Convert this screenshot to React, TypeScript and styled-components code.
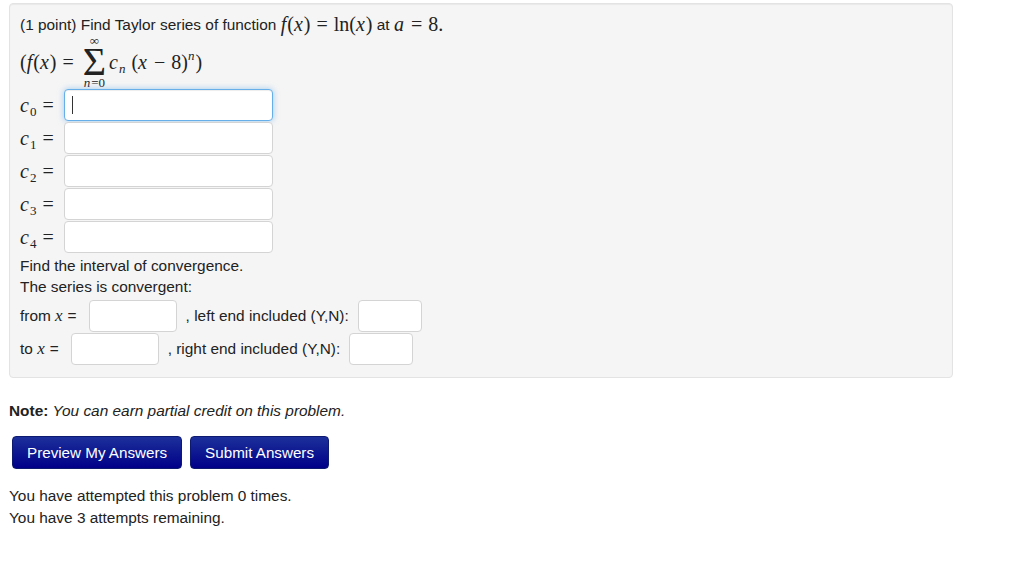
import React from 'react';
import styled, { createGlobalStyle } from 'styled-components';

const GlobalStyle = createGlobalStyle`
  html, body {
    margin: 0;
    padding: 0;
    background: #ffffff;
  }
  body {
    font-family: "Liberation Sans", Arial, sans-serif;
    font-size: 15.4px;
    color: #222;
  }
`;

const Page = styled.div`
  padding: 3px 9px 0 9px;
  width: 944px;
`;

const ProblemWell = styled.div`
  background: #f5f5f5;
  border: 1px solid #e3e3e3;
  border-radius: 4px;
  box-shadow: inset 0 1px 1px rgba(0, 0, 0, 0.05);
  padding: 10px 10px 12px 10px;
`;

const TextLine = styled.div`
  line-height: 21px;
  min-height: 21px;
  display: flex;
  align-items: center;
`;

const MathSpan = styled.span<{ $size?: number }>`
  font-family: "Liberation Serif", "Times New Roman", serif;
  font-size: ${({ $size }) => $size ?? 20}px;
  white-space: pre;
`;

const Mi = styled.i`
  font-style: italic;
  padding-right: 1px;
`;

const Op = styled.span<{ $space?: number }>`
  display: inline-block;
  margin: 0 ${({ $space }) => $space ?? 6}px;
`;

const DisplayRow = styled.div`
  display: flex;
  align-items: center;
  height: 54px;
`;

const SumStack = styled.span`
  display: inline-flex;
  flex-direction: column;
  align-items: center;
  margin: 0 3px 0 3px;
  line-height: 1;
`;

const Limit = styled.span`
  font-family: "Liberation Serif", "Times New Roman", serif;
  font-size: 13px;
  line-height: 12px;
`;

const Sigma = styled.span`
  font-family: "Liberation Serif", "Times New Roman", serif;
  font-size: 40px;
  line-height: 30px;
  height: 30px;
`;

const Sub = styled.sub`
  font-size: 13px;
  vertical-align: -4px;
  line-height: 0;
`;

const Sup = styled.sup`
  font-size: 13px;
  vertical-align: 9px;
  line-height: 0;
`;

const CoefList = styled.div`
  display: flex;
  flex-direction: column;
  gap: 1px;
`;

const CoefRow = styled.div`
  display: flex;
  align-items: center;
  height: 32px;
`;

const CoefLabel = styled.span`
  width: 44px;
  font-family: "Liberation Serif", "Times New Roman", serif;
  font-size: 20px;
  color: #222;
  white-space: pre;
`;

const FieldWrap = styled.span`
  position: relative;
  display: inline-block;
`;

const AnswerInput = styled.input<{ $width: number; $focused?: boolean }>`
  box-sizing: border-box;
  width: ${({ $width }) => $width}px;
  height: 32px;
  padding: 4px 8px;
  font-family: "Liberation Sans", Arial, sans-serif;
  font-size: 15px;
  background: #fff;
  border: 1px solid ${({ $focused }) => ($focused ? '#66afe9' : '#d4d4d4')};
  border-radius: 4px;
  box-shadow: ${({ $focused }) =>
    $focused
      ? 'inset 0 1px 1px rgba(0,0,0,.075), 0 0 6px rgba(102,175,233,.6)'
      : 'none'};
  outline: none;
  display: block;
`;

const Caret = styled.span`
  position: absolute;
  left: 8px;
  top: 7px;
  width: 1px;
  height: 18px;
  background: #333;
`;

const IntervalRow = styled.div`
  display: flex;
  align-items: center;
  height: 33px;
`;

const EqSign = styled.span`
  margin: 0 12px 0 4px;
`;

const RowText = styled.span`
  margin: 0 9px;
`;

const Note = styled.div`
  margin: 22px 0 0 0;
  line-height: 21px;
  b {
    font-weight: bold;
  }
  i {
    font-style: italic;
  }
`;

const ButtonBar = styled.div`
  display: flex;
  gap: 8px;
  margin: 15px 0 0 3px;
`;

const SubmitButton = styled.button`
  height: 33px;
  padding: 0 14px;
  font-family: "Liberation Sans", Arial, sans-serif;
  font-size: 15.2px;
  color: #fff;
  background: linear-gradient(#1c309a, #000088);
  border: 1px solid #0d1a70;
  border-radius: 4px;
  cursor: pointer;
`;

const Attempts = styled.div`
  margin-top: 16px;
  line-height: 22px;
`;

const Var = ({ c }: { c: string }) => <Mi>{c}</Mi>;

export default function App() {
  const coefs = [0, 1, 2, 3, 4];
  return (
    <>
      <GlobalStyle />
      <Page>
        <ProblemWell>
          <TextLine>
            (1 point) Find Taylor series of function&nbsp;
            <MathSpan>
              <Var c="f" />(<Var c="x" />)<Op>=</Op>ln(<Var c="x" />)
            </MathSpan>
            &nbsp;at&nbsp;
            <MathSpan>
              <Var c="a" />
              <Op>=</Op>8.
            </MathSpan>
          </TextLine>
          <DisplayRow>
            <MathSpan>
              (<Var c="f" />(<Var c="x" />)<Op>=</Op>
            </MathSpan>
            <SumStack>
              <Limit>∞</Limit>
              <Sigma>Σ</Sigma>
              <Limit>
                <Mi>n</Mi>=0
              </Limit>
            </SumStack>
            <MathSpan>
              <Var c="c" />
              <Sub>
                <Mi>n</Mi>
              </Sub>
              {' '}(<Var c="x" />
              <Op>−</Op>8)
              <Sup>
                <Mi>n</Mi>
              </Sup>
              )
            </MathSpan>
          </DisplayRow>
          <CoefList>
            {coefs.map((i) => (
              <CoefRow key={i}>
                <CoefLabel>
                  <Mi>c</Mi>
                  <Sub>{i}</Sub>
                  <Op $space={6}>=</Op>
                </CoefLabel>
                <FieldWrap>
                  <AnswerInput $width={209} $focused={i === 0} />
                  {i === 0 && <Caret />}
                </FieldWrap>
              </CoefRow>
            ))}
          </CoefList>
          <TextLine style={{ marginTop: 2 }}>Find the interval of convergence.</TextLine>
          <TextLine>The series is convergent:</TextLine>
          <IntervalRow style={{ marginTop: 2 }}>
            from&nbsp;
            <MathSpan $size={17}>
              <Mi>x</Mi>
            </MathSpan>
            <EqSign>=</EqSign>
            <AnswerInput $width={88} />
            <RowText>, left end included (Y,N):</RowText>
            <AnswerInput $width={64} />
          </IntervalRow>
          <IntervalRow>
            to&nbsp;
            <MathSpan $size={17}>
              <Mi>x</Mi>
            </MathSpan>
            <EqSign>=</EqSign>
            <AnswerInput $width={88} />
            <RowText>, right end included (Y,N):</RowText>
            <AnswerInput $width={64} />
          </IntervalRow>
        </ProblemWell>
        <Note>
          <b>Note:</b> <i>You can earn partial credit on this problem.</i>
        </Note>
        <ButtonBar>
          <SubmitButton>Preview My Answers</SubmitButton>
          <SubmitButton>Submit Answers</SubmitButton>
        </ButtonBar>
        <Attempts>
          You have attempted this problem 0 times.
          <br />
          You have 3 attempts remaining.
        </Attempts>
      </Page>
    </>
  );
}
